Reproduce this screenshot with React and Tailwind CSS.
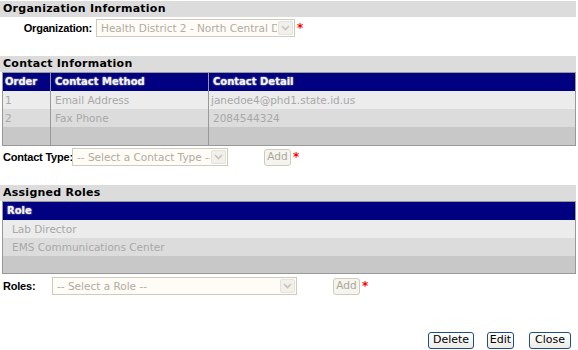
import React from "react";

const font = { fontFamily: '"DejaVu Sans", Verdana, sans-serif' };
const labelFont = { fontFamily: '"Liberation Sans", Arial, sans-serif' };

function Chevron() {
  return (
    <svg width="9" height="6" viewBox="0 0 9 6">
      <path d="M1 1 L4.5 4.5 L8 1" fill="none" stroke="#c8c4b8" strokeWidth="1.6" />
    </svg>
  );
}

function FakeSelect({ text, width }) {
  return (
    <div
      className="flex h-[18px] shrink-0 items-stretch border border-[#cfcbbf] bg-[#fffbf7]"
      style={{ width }}
    >
      <div className="flex-1 overflow-hidden whitespace-nowrap pl-[4px] text-[10.5px] leading-[16px] text-[#b0ac9f]">
        {text}
      </div>
      <div className="m-[1px] flex w-[15px] items-center justify-center rounded-[2px] border border-[#e4e2dc] bg-[#f1f0ec]">
        <Chevron />
      </div>
    </div>
  );
}

function AddBtn() {
  return (
    <div className="flex h-[17px] w-[27px] items-center justify-center rounded-[3px] border border-[#cfcbbf] bg-[#f5f4ee] text-[10.5px] text-[#aca899]">
      Add
    </div>
  );
}

function Star() {
  return <span className="ml-[2px] text-[12px] font-bold leading-[12px] text-[#ff0000]">*</span>;
}

function Bar({ children }) {
  return (
    <div className="h-[16px] w-[576px] bg-[#dcdcdc] pl-[3px] text-[11px] font-bold leading-[16px] tracking-[0.25px] text-black">
      {children}
    </div>
  );
}

const hdrText =
  "text-[10px] font-bold leading-[18px] text-[#f4f4f4] [text-shadow:0_0_2px_#9a9ab0,0_0_1px_#9a9ab0]";
const cellText = "text-[10.5px] leading-[18px] text-[#a8a8a8]";
const labelCls = "shrink-0 whitespace-nowrap text-[11px] font-bold tracking-[-0.2px] text-black";

function Btn({ children, w }) {
  return (
    <div
      className="flex h-[17px] items-center justify-center rounded-[3px] border border-[#1e4f80] bg-gradient-to-b from-white to-[#ecebe6] text-[11px] text-black"
      style={{ width: w }}
    >
      {children}
    </div>
  );
}

export default function App() {
  return (
    <div className="relative h-[350px] w-[578px] bg-white" style={font}>
      <div className="h-[1px]" />
      <Bar>Organization Information</Bar>
      <div className="mt-[2px] flex h-[18px] items-center">
        <div className={`w-[92px] text-right ${labelCls}`} style={labelFont}>
          Organization:
        </div>
        <div className="ml-[4px]">
          <FakeSelect text="Health District 2 - North Central District" width={199} />
        </div>
        <Star />
      </div>

      <div className="mt-[19px]">
        <Bar>Contact Information</Bar>
      </div>
      <div className="ml-[2px] w-[574px] border border-[#999999]">
        <div className="flex h-[18px] bg-[#000080]">
          <div className={`w-[48px] border-r border-[#999] pl-[2px] ${hdrText}`}>Order</div>
          <div className={`w-[158px] border-r border-[#999] pl-[4px] ${hdrText}`}>Contact Method</div>
          <div className={`flex-1 pl-[4px] ${hdrText}`}>Contact Detail</div>
        </div>
        <div className="flex h-[18px] bg-[#ececec]">
          <div className={`w-[48px] border-r border-[#999] pl-[2px] ${cellText}`}>1</div>
          <div className={`w-[158px] border-r border-[#999] pl-[4px] ${cellText}`}>Email Address</div>
          <div className={`flex-1 pl-[2px] ${cellText}`}>janedoe4@phd1.state.id.us</div>
        </div>
        <div className="flex h-[18px] bg-[#dcdcdc]">
          <div className={`w-[48px] border-r border-[#999] pl-[2px] ${cellText}`}>2</div>
          <div className={`w-[158px] border-r border-[#999] pl-[4px] ${cellText}`}>Fax Phone</div>
          <div className={`flex-1 pl-[4px] ${cellText}`}>2084544324</div>
        </div>
        <div className="flex h-[18px] bg-[#c8c8c8]">
          <div className="w-[48px] border-r border-[#999]" />
          <div className="w-[158px] border-r border-[#999]" />
          <div className="flex-1" />
        </div>
      </div>
      <div className="mt-[2px] flex h-[18px] items-center">
        <div className={`w-[72px] pl-[3px] ${labelCls}`} style={labelFont}>
          Contact Type:
        </div>
        <FakeSelect text="-- Select a Contact Type --" width={156} />
        <div className="ml-[36px]">
          <AddBtn />
        </div>
        <Star />
      </div>

      <div className="mt-[19px]">
        <Bar>Assigned Roles</Bar>
      </div>
      <div className="ml-[2px] w-[574px] border border-[#999999]">
        <div className={`h-[18px] bg-[#000080] pl-[4px] ${hdrText}`}>Role</div>
        <div className={`h-[18px] bg-[#ececec] pl-[9px] ${cellText}`}>Lab Director</div>
        <div className={`h-[18px] bg-[#dcdcdc] pl-[9px] ${cellText}`}>EMS Communications Center</div>
        <div className="h-[17px] bg-[#c8c8c8]" />
      </div>
      <div className="mt-[3px] flex h-[18px] items-center">
        <div className={`w-[52px] pl-[3px] ${labelCls}`} style={labelFont}>
          Roles:
        </div>
        <FakeSelect text="-- Select a Role --" width={245} />
        <div className="ml-[36px]">
          <AddBtn />
        </div>
        <Star />
      </div>

      <div className="mt-[37px] flex">
        <div className="ml-[428px]">
          <Btn w={46}>Delete</Btn>
        </div>
        <div className="ml-[13px]">
          <Btn w={27}>Edit</Btn>
        </div>
        <div className="ml-[15px]">
          <Btn w={42}>Close</Btn>
        </div>
      </div>
    </div>
  );
}
